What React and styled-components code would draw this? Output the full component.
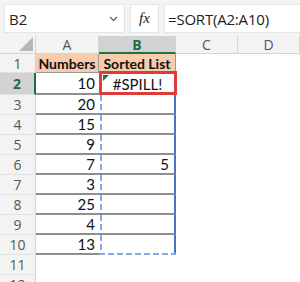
import React from "react";
import styled, { createGlobalStyle } from "styled-components";

const GlobalStyle = createGlobalStyle`
  body {
    margin: 0;
    background: #fff;
    font-family: "Lato", "Open Sans", sans-serif;
    overflow: hidden;
  }
`;

const Page = styled.div`
  width: 300px;
  height: 282px;
  overflow: hidden;
  background: #fff;
`;

const FormulaBar = styled.div`
  height: 36px;
  background: #f3f3f3;
  display: flex;
  align-items: flex-start;
  padding: 4px 0 0 4px;
  box-sizing: border-box;
  gap: 5px;
`;

const Box = styled.div`
  height: 29px;
  background: #fff;
  border: 1px solid #e4e4e4;
  box-sizing: border-box;
  display: flex;
  align-items: center;
  font-family: "Open Sans", sans-serif;
  font-size: 15px;
  color: #222;
`;

const NameBox = styled(Box)`
  width: 121px;
  padding: 0 6px 0 4px;
  justify-content: space-between;
`;

const FxBox = styled(Box)`
  width: 29px;
  justify-content: center;
  font-family: "Liberation Serif", serif;
  font-style: italic;
  font-size: 15px;
`;

const FormulaBox = styled(Box)`
  flex: 1;
  border-right: none;
  padding-left: 3px;
  letter-spacing: -0.2px;
`;

const Sheet = styled.div`
  display: grid;
  grid-template-columns: 36px 63px 77px 62px 62px;
  grid-template-rows: 18px 19px 22px repeat(10, 20px);
  font-family: "Lato", sans-serif;
  font-size: 15px;
`;

const ColHead = styled.div`
  background: ${p => (p.$active ? "#d2d2d2" : "#f3f3f3")};
  color: ${p => (p.$active ? "#1e6c41" : "#555")};
  font-weight: ${p => (p.$active ? 700 : 400)};
  border-right: 1px solid #d4d4d4;
  border-bottom: ${p => (p.$active ? "2px solid #1e7145" : "1px solid #d4d4d4")};
  box-sizing: border-box;
  display: flex;
  align-items: center;
  justify-content: center;
  font-family: "Open Sans", sans-serif;
  font-size: 14px;
`;

const Corner = styled.div`
  background: #f3f3f3;
  border-right: 1px solid #d4d4d4;
  border-bottom: 1px solid #d4d4d4;
  box-sizing: border-box;
  display: flex;
  align-items: flex-end;
  justify-content: flex-end;
  padding: 0 2px 2px 0;
`;

const Triangle = styled.div`
  width: 0;
  height: 0;
  border-left: 14px solid transparent;
  border-bottom: 14px solid #b7b7b7;
`;

const RowHead = styled.div`
  background: ${p => (p.$active ? "#d2d2d2" : "#f3f3f3")};
  color: ${p => (p.$active ? "#1e6c41" : "#555")};
  font-weight: ${p => (p.$active ? 700 : 400)};
  border-right: ${p => (p.$active ? "2px solid #1e7145" : "1px solid #d4d4d4")};
  border-bottom: 1px solid #e1e1e1;
  box-sizing: border-box;
  display: flex;
  align-items: center;
  justify-content: center;
  font-family: "Open Sans", sans-serif;
  font-size: 14px;
`;

const HeaderCell = styled.div`
  background: #f8cbad;
  font-weight: 700;
  font-size: 14px;
  color: #111;
  border-right: 1px solid #9a9a9a;
  border-bottom: 1px solid #9a9a9a;
  box-sizing: border-box;
  display: flex;
  align-items: center;
  justify-content: center;
  white-space: nowrap;
  padding-top: 1px;
`;

const NumCell = styled.div`
  color: #111;
  border-bottom: ${p => (p.$ruled ? "2px solid #8e8e8e" : "none")};
  box-sizing: border-box;
  display: flex;
  align-items: center;
  justify-content: flex-end;
  padding-right: 4px;
`;

const SpillCell = styled(NumCell)`
  position: relative;
  padding-right: 5px;
  border-right: 2px solid #4a72c0;
  background-image: repeating-linear-gradient(
    to bottom,
    #86a9e4 0 6px,
    transparent 6px 9px
  );
  background-size: 2px 100%;
  background-repeat: no-repeat;
  background-position: 1px 0;
  ${p =>
    p.$last &&
    `
    border-bottom: none;
    &::after {
      content: "";
      position: absolute;
      left: 0;
      right: -2px;
      bottom: 0;
      height: 2px;
      background: repeating-linear-gradient(to right, #86a9e4 0 6px, transparent 6px 9px);
    }
  `}
`;

const ErrorCell = styled.div`
  position: relative;
  display: flex;
  align-items: center;
  justify-content: center;
  color: #111;
`;

const Selection = styled.div`
  position: absolute;
  left: 0;
  right: -1px;
  top: -2px;
  bottom: 0;
  border: 3px solid #e03b3b;
  pointer-events: none;
`;

const ErrorFlag = styled.div`
  position: absolute;
  left: 4px;
  top: 2px;
  width: 0;
  height: 0;
  border-top: 6px solid #1e7145;
  border-right: 6px solid transparent;
`;

const Blank = styled.div``;

const numbers = [10, 20, 15, 9, 7, 3, 25, 4, 13];

const Chevron = () => (
  <svg width="9" height="6" viewBox="0 0 9 6">
    <path d="M1 1l3.5 3.5L8 1" fill="none" stroke="#555" strokeWidth="1.2" />
  </svg>
);

const App = () => (
  <Page>
    <GlobalStyle />
    <FormulaBar>
      <NameBox>
        <span>B2</span>
        <Chevron />
      </NameBox>
      <FxBox>fx</FxBox>
      <FormulaBox>=SORT(A2:A10)</FormulaBox>
    </FormulaBar>
    <Sheet>
      <Corner>
        <Triangle />
      </Corner>
      <ColHead>A</ColHead>
      <ColHead $active>B</ColHead>
      <ColHead>C</ColHead>
      <ColHead>D</ColHead>

      <RowHead>1</RowHead>
      <HeaderCell>Numbers</HeaderCell>
      <HeaderCell>Sorted List</HeaderCell>
      <Blank />
      <Blank />

      {numbers.map((n, i) => {
        const row = i + 2;
        return (
          <React.Fragment key={row}>
            <RowHead $active={row === 2}>{row}</RowHead>
            <NumCell $ruled>{n}</NumCell>
            {row === 2 ? (
              <ErrorCell>
                <Selection />
                <ErrorFlag />
                #SPILL!
              </ErrorCell>
            ) : (
              <SpillCell $ruled={row !== 10} $last={row === 10}>
                {row === 6 ? 5 : ""}
              </SpillCell>
            )}
            <Blank />
            <Blank />
          </React.Fragment>
        );
      })}

      <RowHead>11</RowHead>
      <Blank />
      <Blank />
      <Blank />
      <Blank />
      <RowHead>12</RowHead>
    </Sheet>
  </Page>
);

export default App;
